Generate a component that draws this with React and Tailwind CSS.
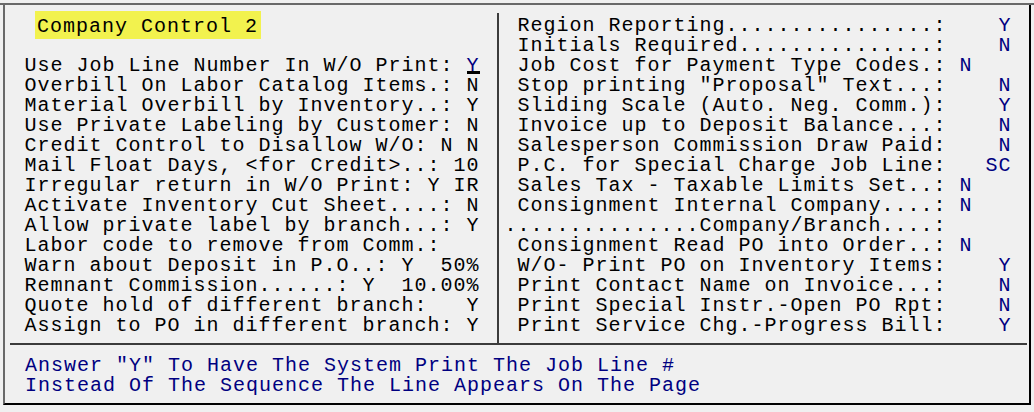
const LEFT_ROWS = [
  ["Overbill On Labor Catalog Items.: ", "N"],
  ["Material Overbill by Inventory..: ", "Y"],
  ["Use Private Labeling by Customer: ", "N"],
  ["Credit Control to Disallow W/O: ", "N N"],
  ["Mail Float Days, <for Credit>..: ", "10"],
  ["Irregular return in W/O Print: ", "Y IR"],
  ["Activate Inventory Cut Sheet....: ", "N"],
  ["Allow private label by branch...: ", "Y"],
  ["Labor code to remove from Comm.:", ""],
  ["Warn about Deposit in P.O..: ", "Y  50%"],
  ["Remnant Commission......: ", "Y  10.00%"],
  ["Quote hold of different branch:   ", "Y"],
  ["Assign to PO in different branch: ", "Y"],
];

const RIGHT_ROWS = [
  [" Region Reporting................:    ", "Y"],
  [" Initials Required...............:    ", "N"],
  [" Job Cost for Payment Type Codes.: ", "N"],
  [' Stop printing "Proposal" Text...:    ', "N"],
  [" Sliding Scale (Auto. Neg. Comm.):    ", "Y"],
  [" Invoice up to Deposit Balance...:    ", "N"],
  [" Salesperson Commission Draw Paid:    ", "N"],
  [" P.C. for Special Charge Job Line:   ", "SC"],
  [" Sales Tax - Taxable Limits Set..: ", "N"],
  [" Consignment Internal Company....: ", "N"],
  ["...............Company/Branch....:", ""],
  [" Consignment Read PO into Order..: ", "N"],
  [" W/O- Print PO on Inventory Items:    ", "Y"],
  [" Print Contact Name on Invoice...:    ", "N"],
  [" Print Special Instr.-Open PO Rpt:    ", "N"],
  [" Print Service Chg.-Progress Bill:    ", "Y"],
];

// fixed 20px terminal rows; the taller line box drops the glyphs onto the row centre
function Row({ children }) {
  return <div className="h-[20px] leading-[23px] whitespace-pre">{children}</div>;
}

export default function App() {
  return (
    <div className="w-[1034px] h-[412px] overflow-hidden bg-[#f0f0f0] pt-[3px] font-['Liberation_Mono',monospace] text-[20px] leading-[20px] tracking-[1px] text-black">
      <div className="h-[2px] bg-[#696969]" />
      <div className="ml-[3px] w-[1028px] h-[400px] border-l-2 border-r-2 border-b-2 border-l-[#696969] border-r-black border-b-black">
        <div className="flex h-[338px]">
          {/* left settings column */}
          <div className="w-[492px] pl-[19.5px] pt-[6px]">
            <div className="ml-[10.5px] w-[226px] h-[28px] pl-[2px] leading-[31px] bg-[#f2f24e] whitespace-pre">
              Company Control 2
            </div>
            <div className="mt-[15px]">
              <Row>
                Use Job Line Number In W/O Print:{" "}
                <span className="relative inline-block h-[20px] align-top text-[#000080]">
                  Y
                  <span className="absolute left-0 bottom-0 h-[3px] w-full bg-black" />
                </span>
              </Row>
              {LEFT_ROWS.map(([label, value]) => (
                <Row key={label}>
                  {label}
                  {value}
                </Row>
              ))}
            </div>
          </div>

          {/* right settings column */}
          <div className="mt-[8px] h-[330px] flex-1 border-l-2 border-[#3c3c3c] pl-[5.5px] pt-[1px]">
            {RIGHT_ROWS.map(([label, value]) => (
              <Row key={label}>
                {label}
                <span className="text-[#000080]">{value}</span>
              </Row>
            ))}
          </div>
        </div>

        <div className="ml-[5px] w-[1017px] h-[2px] bg-[#3c3c3c]" />

        {/* field help */}
        <div className="pl-[20px] pt-[9px] text-[#000080]">
          <Row>Answer "Y" To Have The System Print The Job Line #</Row>
          <Row>Instead Of The Sequence The Line Appears On The Page</Row>
        </div>
      </div>
    </div>
  );
}
